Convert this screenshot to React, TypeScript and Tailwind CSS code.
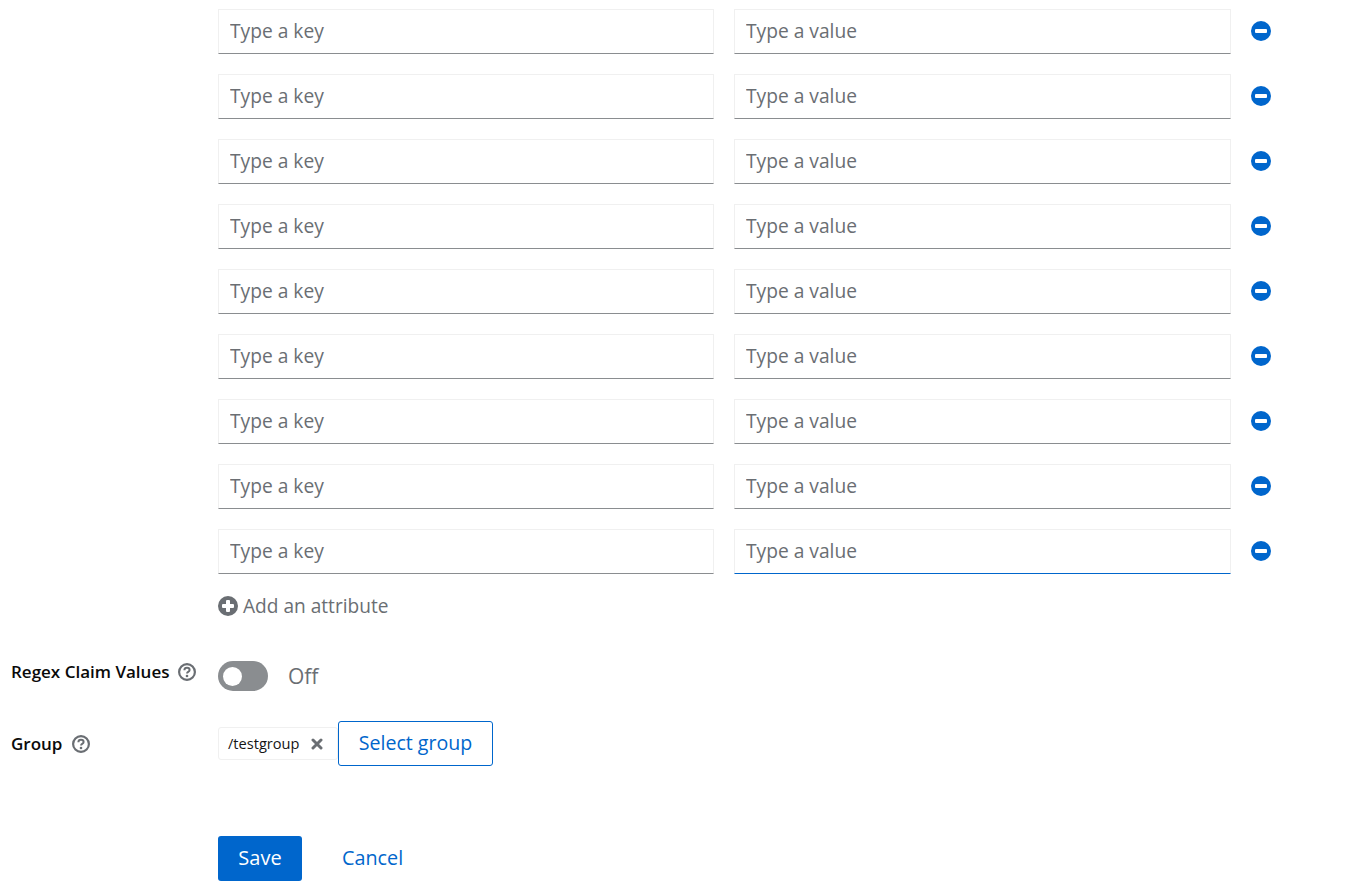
import React from 'react';

const rows = [0, 1, 2, 3, 4, 5, 6, 7, 8];

const MinusIcon = () => (
  <svg viewBox="0 0 20 20" className="w-5 h-5 block">
    <circle cx="10" cy="10" r="10" fill="#06c" />
    <rect x="4" y="8" width="12" height="4" rx="1" fill="#fff" />
  </svg>
);

const PlusIcon = () => (
  <svg viewBox="0 0 20 20" className="w-5 h-5 block">
    <circle cx="10" cy="10" r="10" fill="#6a6e73" />
    <rect x="4" y="8" width="12" height="4" rx="1" fill="#fff" />
    <rect x="8" y="4" width="4" height="12" rx="1" fill="#fff" />
  </svg>
);

const HelpIcon = () => (
  <svg viewBox="0 0 18 18" className="w-[18px] h-[18px] block">
    <circle cx="9" cy="9" r="7.9" fill="none" stroke="#6a6e73" strokeWidth="2.2" />
    <path d="M6.4 7.2c0-1.5 1.1-2.4 2.6-2.4s2.6.9 2.6 2.1c0 1.1-.7 1.6-1.4 2-.7.4-1.1.7-1.1 1.5" fill="none" stroke="#6a6e73" strokeWidth="2" />
    <circle cx="9" cy="13" r="1.3" fill="#6a6e73" />
  </svg>
);

const Field = ({ placeholder, active }: { placeholder: string; active?: boolean }) => (
  <input
    placeholder={placeholder}
    className={`w-full h-[45px] px-[11px] pb-[2px] bg-white border border-[#f0f0f0] text-[19.2px] outline-none placeholder:text-[#6a6e73] ${active ? 'border-b-[#06c]' : 'border-b-[#8a8d90]'}`}
  />
);

export default function App() {
  return (
    <div className="min-h-[895px] bg-white pt-[9px] pl-[218px] font-['Open_Sans','Noto_Sans',sans-serif] overflow-hidden">
      <div className="flex flex-col gap-5">
        {rows.map((r) => (
          <div key={r} className="flex items-center">
            <div className="w-[496px]"><Field placeholder="Type a key" /></div>
            <div className="w-[497px] ml-5"><Field placeholder="Type a value" active={r === 8} /></div>
            <button className="ml-5 -mt-[2px]"><MinusIcon /></button>
          </div>
        ))}
      </div>

      <button className="flex items-center gap-[5px] mt-[22px] h-5 text-[19.1px] text-[#6a6e73]">
        <PlusIcon />
        Add an attribute
      </button>

      <div className="flex items-center mt-[45px] -ml-[207px]">
        <div className="w-[207px] flex items-center gap-[9px] text-[17px] font-semibold text-[#0a0a0a] -mt-2">
          Regex Claim Values <HelpIcon />
        </div>
        <div className="w-[50px] h-[30px] rounded-full bg-[#8a8d90] flex items-center pl-[5px]">
          <div className="w-[19px] h-[19px] rounded-full bg-white" />
        </div>
        <span className="ml-5 text-[21px] leading-[30px] text-[#6a6e73]">Off</span>
      </div>

      <div className="flex items-center mt-[30px] -ml-[207px]">
        <div className="w-[207px] flex items-center gap-[10px] text-[17px] font-semibold text-[#0a0a0a]">
          Group <HelpIcon />
        </div>
        <div className="w-[120px] h-[33px] flex items-center pl-[9px] bg-white border border-[#f0f0f0] rounded-[3px] text-[14.6px] text-[#151515]">
          /testgroup
          <svg viewBox="0 0 12 12" className="w-3 h-3 ml-[12px]">
            <path d="M2 2l8 8M10 2l-8 8" stroke="#6a6e73" strokeWidth="3" strokeLinecap="round" />
          </svg>
        </div>
        <button className="w-[155px] h-[45px] pb-[2px] border border-[#06c] rounded-[3px] text-[19.6px] text-[#06c]">Select group</button>
      </div>

      <div className="flex items-center mt-[70px]">
        <button className="w-[84px] h-[45px] pb-[2px] bg-[#06c] rounded-[3px] text-[20px] text-white">Save</button>
        <button className="ml-10 pb-[2px] text-[19.8px] text-[#06c]">Cancel</button>
      </div>
    </div>
  );
}
